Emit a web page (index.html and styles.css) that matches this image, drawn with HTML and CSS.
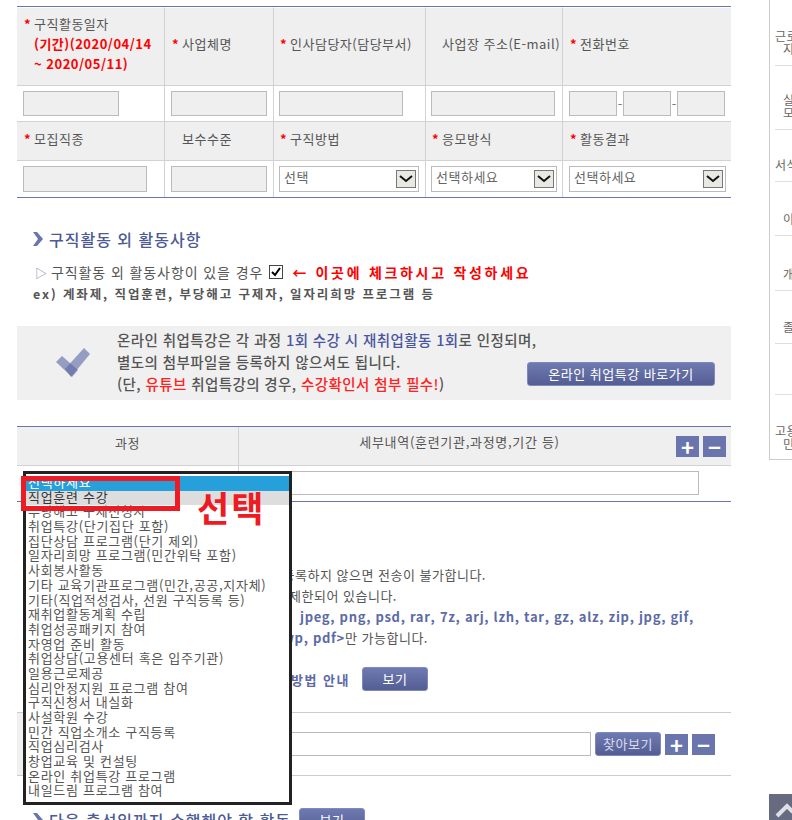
FILE: index.html
```html
<!DOCTYPE html>
<html lang="ko">
<head>
    <meta charset="UTF-8">
    <title>구직활동 등록</title>
    <link rel="stylesheet" href="styles.css">
</head>
<body>
<div class="page">
    <div class="main">
        <table class="activity">
            <colgroup>
                <col class="c1"><col class="c2"><col class="c3"><col class="c4"><col class="c5">
            </colgroup>
            <tr class="r1">
                <th>
                    <span class="star">*</span>구직활동일자
                    <div class="period">(기간)(2020/04/14</div>
                    <div class="period">~ 2020/05/11)</div>
                </th>
                <th><span class="star">*</span>사업체명</th>
                <th><span class="star">*</span>인사담당자(담당부서)</th>
                <th><span class="nostar"></span>사업장 주소(E-mail)</th>
                <th><span class="star">*</span>전화번호</th>
            </tr>
            <tr class="r2">
                <td><input class="box w96" type="text"></td>
                <td><input class="box w96" type="text"></td>
                <td><input class="box w124" type="text"></td>
                <td><input class="box w124" type="text"></td>
                <td>
                    <div class="phone">
                        <input class="box" type="text"><span class="dash">-</span>
                        <input class="box" type="text"><span class="dash">-</span>
                        <input class="box" type="text">
                    </div>
                </td>
            </tr>
            <tr class="r3">
                <th><span class="star">*</span>모집직종</th>
                <th><span class="nostar"></span>보수수준</th>
                <th><span class="star">*</span>구직방법</th>
                <th><span class="star">*</span>응모방식</th>
                <th><span class="star">*</span>활동결과</th>
            </tr>
            <tr class="r4">
                <td><input class="box tall w124" type="text"></td>
                <td><input class="box tall w96" type="text"></td>
                <td>
                    <div class="select w140">선택<span class="arrow"><svg width="14" height="8" viewBox="0 0 14 8"><path d="M1 1l6 5 6-5" fill="none" stroke="#111" stroke-width="2"/></svg></span></div>
                </td>
                <td>
                    <div class="select w126">선택하세요<span class="arrow"><svg width="14" height="8" viewBox="0 0 14 8"><path d="M1 1l6 5 6-5" fill="none" stroke="#111" stroke-width="2"/></svg></span></div>
                </td>
                <td>
                    <div class="select w157">선택하세요<span class="arrow"><svg width="14" height="8" viewBox="0 0 14 8"><path d="M1 1l6 5 6-5" fill="none" stroke="#111" stroke-width="2"/></svg></span></div>
                </td>
            </tr>
        </table>

        <h3 class="title first">
            <svg width="10" height="14" viewBox="0 0 10 14"><path d="M0 0h4l6 7-6 7H0l5-7z" fill="#6a75ae"/></svg>
            구직활동 외 활동사항
        </h3>
        <div class="other-check">
            <span class="tri">▷</span>
            <span>구직활동 외 활동사항이 있을 경우</span>
            <span class="tick"><svg width="14" height="14" viewBox="0 0 14 14"><path d="M3 7l3 3 5-7" fill="none" stroke="#000" stroke-width="2"/></svg></span>
            <span class="must">← 이곳에 체크하시고 작성하세요</span>
        </div>
        <div class="example">ex) 계좌제, 직업훈련, 부당해고 구제자, 일자리희망 프로그램 등</div>

        <div class="banner">
            <svg class="banner-icon" width="34" height="30" viewBox="0 0 34 30">
                <path d="M0 14l6-6 16 14-6 7z" fill="#5a66a3" opacity=".6"/>
                <path d="M9 21L28 0l6 6-19 23z" fill="#5a66a3" opacity=".6"/>
            </svg>
            <div class="banner-text">
                <div>온라인 취업특강은 각 과정 <span class="blue">1회 수강 시 재취업활동 1회</span>로 인정되며,</div>
                <div>별도의 첨부파일을 등록하지 않으셔도 됩니다.</div>
                <div>(단, <span class="red">유튜브</span> 취업특강의 경우, <span class="red">수강확인서 첨부 필수!</span>)</div>
            </div>
            <a class="btn btn-online">온라인 취업특강 바로가기</a>
        </div>

        <div class="course">
            <div class="course-head">
                <div class="course-name">과정</div>
                <div class="course-detail">
                    <span class="detail-label">세부내역(훈련기관,과정명,기간 등)</span>
                    <a class="sq">+</a><a class="sq">−</a>
                </div>
            </div>
            <div class="course-row">
                <div class="course-name"></div>
                <div class="course-input"><input class="plain" type="text"></div>
            </div>
        </div>

        <div class="notes">
            <div class="note n1">첨부파일을 등록하지 않으면 전송이 불가합니다.</div>
            <div class="note n2">파일 용량은 제한되어 있습니다.</div>
            <div class="note n3 ext">jpeg, png, psd, rar, 7z, arj, lzh, tar, gz, alz, zip, jpg, gif,</div>
            <div class="note n4"><span class="ext">hwp, pdf&gt;</span>만 가능합니다.</div>
        </div>
        <div class="guide">
            <span class="guide-label">첨부파일 등록방법 안내</span>
            <a class="btn btn-small">보기</a>
        </div>

        <div class="file-row">
            <div class="file-name"></div>
            <div class="file-input">
                <input class="plain" type="text">
                <a class="btn btn-find">찾아보기</a>
                <a class="sq">+</a><a class="sq">−</a>
            </div>
        </div>

        <div class="next">
            <h3 class="title">
                <svg width="10" height="14" viewBox="0 0 10 14"><path d="M0 0h4l6 7-6 7H0l5-7z" fill="#6a75ae"/></svg>
                다음 출석일까지 수행해야 할 활동
            </h3>
            <a class="btn btn-small">보기</a>
        </div>

        <!-- drop-down list pasted over the form, with the red marks -->
        <ul class="dropdown">
            <li class="on">선택하세요</li>
            <li class="hover">직업훈련 수강</li>
            <li>부당해고 구제신청자</li>
            <li>취업특강(단기집단 포함)</li>
            <li>집단상담 프로그램(단기 제외)</li>
            <li>일자리희망 프로그램(민간위탁 포함)</li>
            <li>사회봉사활동</li>
            <li>기타 교육기관프로그램(민간,공공,지자체)</li>
            <li>기타(직업적성검사, 선원 구직등록 등)</li>
            <li>재취업활동계획 수립</li>
            <li>취업성공패키지 참여</li>
            <li>자영업 준비 활동</li>
            <li>취업상담(고용센터 혹은 입주기관)</li>
            <li>일용근로제공</li>
            <li>심리안정지원 프로그램 참여</li>
            <li>구직신청서 내실화</li>
            <li>사설학원 수강</li>
            <li>민간 직업소개소 구직등록</li>
            <li>직업심리검사</li>
            <li>창업교육 및 컨설팅</li>
            <li>온라인 취업특강 프로그램</li>
            <li>내일드림 프로그램 참여</li>
        </ul>
        <div class="red-box"></div>
        <div class="red-word">선택</div>
    </div>

    <div class="side">
        <div class="side-item"><div>근로</div><div class="in">지</div></div>
        <div class="side-item"><div class="in">실</div><div class="in">모</div></div>
        <div class="side-item"><div>서식</div></div>
        <div class="side-item"><div class="in">이</div></div>
        <div class="side-item"><div class="in">개</div></div>
        <div class="side-item"><div class="in">졸</div></div>
        <div class="side-item"></div>
        <div class="side-item"><div>고용</div><div class="in">민</div></div>
    </div>

    <a class="to-top"><svg width="23" height="26" viewBox="0 0 23 26"><path d="M8 22l10-10 6 6" fill="none" stroke="#dfe0e6" stroke-width="4"/></svg></a>
</div>
</body>
</html>
```

FILE: styles.css
```css
html, body {
    margin: 0;
    padding: 0;
    background: #fff;
}
body {
    font-family: "Noto Sans CJK KR", "Liberation Sans", sans-serif;
    font-size: 13px;
    letter-spacing: 0.5px;
    color: #555;
}
.page {
    position: relative;
    display: flex;
    width: 792px;
    height: 820px;
    overflow: hidden;
}
.main {
    position: relative;
    flex: none;
    width: 714px;
    margin-left: 17px;
}

/* top table */
.activity {
    width: 714px;
    margin-top: 6px;
    table-layout: fixed;
    border-collapse: separate;
    border-spacing: 0;
    border-top: 1px solid #6a75ae;
    border-bottom: 1px solid #6a75ae;
}
.c1 { width: 148px; }
.c2 { width: 109px; }
.c3 { width: 152px; }
.c4 { width: 137px; }
.c5 { width: 168px; }
.activity th, .activity td {
    padding: 0 0 0 6px;
    border-right: 1px solid #d2d2d2;
    border-bottom: 1px solid #d2d2d2;
    text-align: left;
    font-weight: normal;
    box-sizing: border-box;
}
.activity th {
    padding: 0 0 6px 7px;
    background: #efefef;
    line-height: 19px;
}
.activity th:nth-child(3), .activity th:nth-child(4) { padding-left: 6px; }
.activity td:nth-child(3), .activity td:nth-child(4) { padding-left: 5px; }
.activity th:last-child, .activity td:last-child { border-right: 0; }
.activity .r1 th {
    height: 79px;
    padding-bottom: 6px;
    border-top: 1px solid #fff;
}
.r2 td { height: 36px; }
.r3 th { height: 39px; }
.r4 td { height: 36px; border-bottom: 0; }
.star {
    display: inline-block;
    width: 10px;
    color: #f00;
    font-weight: bold;
}
.nostar {
    display: inline-block;
    width: 10px;
}
.period {
    margin-top: 1px;
    padding-left: 10px;
    color: #f00;
    font-weight: bold;
}
.box {
    display: block;
    box-sizing: border-box;
    height: 25px;
    margin: 0;
    padding: 0;
    border: 1px solid #bbb;
    background: #efefef;
}
.tall { height: 26px; }
.w96 { width: 96px; }
.w124 { width: 124px; }
.phone {
    display: flex;
    align-items: center;
}
.phone .box { width: 48px; }
.dash {
    width: 6px;
    text-align: center;
    letter-spacing: 0;
    color: #777;
}
.select {
    position: relative;
    box-sizing: border-box;
    height: 26px;
    padding-left: 4px;
    border: 1px solid #bbb;
    background: #fff;
    line-height: 20px;
    color: #666;
}
.w140 { width: 140px; }
.w126 { width: 126px; }
.w157 { width: 157px; }
.arrow {
    position: absolute;
    right: 2px;
    top: 3px;
    display: flex;
    align-items: center;
    justify-content: center;
    box-sizing: border-box;
    width: 20px;
    height: 18px;
    border: 1px solid #777;
    background: #e9e9e4;
}

/* headings */
.title {
    display: flex;
    align-items: center;
    gap: 6px;
    margin: 0;
    padding-left: 16px;
    font-size: 16px;
    font-weight: 500;
    letter-spacing: 1px;
    line-height: 20px;
    color: #4c5a96;
    white-space: nowrap;
}
.first { margin-top: 31px; }
.other-check {
    display: flex;
    align-items: center;
    height: 22px;
    margin-top: 12px;
    padding-left: 18px;
    font-size: 14px;
    letter-spacing: 0.9px;
    white-space: nowrap;
}
.tri {
    width: 16px;
    font-size: 12px;
    color: #7c84a8;
    letter-spacing: 0;
}
.tick {
    display: flex;
    box-sizing: border-box;
    width: 14px;
    height: 14px;
    margin-left: 6px;
    border: 1px solid #444;
}
.tick svg { margin: -1px; }
.must {
    margin-left: 9px;
    color: #f00;
    font-weight: bold;
    letter-spacing: 2.7px;
}
.example {
    height: 22px;
    padding-left: 16px;
    font-size: 12.5px;
    font-weight: bold;
    letter-spacing: 1.9px;
    line-height: 22px;
    color: #555;
    white-space: nowrap;
}

/* banner */
.banner {
    display: flex;
    align-items: center;
    box-sizing: border-box;
    height: 74px;
    margin-top: 21px;
    background: #f0f0f0;
}
.banner-icon {
    flex: none;
    margin: 0 27px 0 39px;
}
.banner-text {
    flex: none;
    box-sizing: border-box;
    width: 410px;
    padding-bottom: 2px;
    font-size: 14.5px;
    font-weight: 500;
    letter-spacing: 0.4px;
    line-height: 22px;
    white-space: nowrap;
}
.blue { color: #4a56a0; }
.red { color: #f22; }
.btn {
    display: block;
    box-sizing: border-box;
    flex: none;
    height: 24px;
    border: 1px solid #8089bb;
    border-radius: 3px;
    background: linear-gradient(#6f7ab2, #545e93);
    color: #fff;
    text-align: center;
    line-height: 21px;
}
.btn-online {
    align-self: flex-end;
    width: 188px;
    margin-bottom: 14px;
}
.btn-small { width: 66px; }
.btn-find {
    width: 66px;
    color: #d8daea;
}
.sq {
    display: block;
    flex: none;
    width: 23px;
    height: 21px;
    background: #6a75ae;
    color: #fff;
    font-size: 22px;
    font-weight: bold;
    letter-spacing: 0;
    text-align: center;
    line-height: 20px;
}

/* course table */
.course {
    margin-top: 26px;
    border-top: 1px solid #6a75ae;
    border-bottom: 1px solid #6a75ae;
}
.course-head {
    display: flex;
    height: 39px;
    box-sizing: border-box;
    background: #efefef;
    border-bottom: 1px solid #d2d2d2;
}
.course-name {
    flex: none;
    box-sizing: border-box;
    width: 222px;
    border-right: 1px solid #d2d2d2;
    text-align: center;
    line-height: 32px;
}
.course-detail {
    flex: 1;
    display: flex;
    align-items: center;
    gap: 4px;
    padding-right: 5px;
}
.detail-label {
    flex: 1;
    margin-top: -10px;
    padding-left: 8px;
    text-align: center;
    letter-spacing: 0.7px;
}
.course-row {
    display: flex;
    height: 35px;
}
.course-input {
    flex: 1;
    padding: 5px 32px 0 6px;
}
.plain {
    display: block;
    box-sizing: border-box;
    width: 100%;
    height: 24px;
    margin: 0;
    border: 1px solid #bbb;
    background: #fff;
}

/* notes */
.notes { margin-top: 62px; }
.note {
    height: 21px;
    line-height: 21px;
    text-align: right;
    white-space: nowrap;
}
.n1 { width: 469px; }
.n2 { width: 380px; }
.n3 { width: 677px; }
.n4 { width: 411px; }
.ext {
    color: #5c6aa6;
    font-weight: bold;
    letter-spacing: 0.7px;
}
.guide {
    display: flex;
    align-items: center;
    gap: 12px;
    height: 24px;
    margin-top: 19px;
}
.guide-label {
    width: 333px;
    color: #5c6aa6;
    font-weight: bold;
    letter-spacing: 1.5px;
    text-align: right;
}
.file-row {
    display: flex;
    box-sizing: border-box;
    height: 64px;
    margin-top: 21px;
    border-top: 1px solid #ccc;
    border-bottom: 1px solid #ccc;
}
.file-name {
    flex: none;
    width: 222px;
    background: #f0f0f0;
}
.file-input {
    display: flex;
    align-items: center;
    gap: 4px;
    width: 471px;
    padding-left: 5px;
}
.file-input .plain {
    flex: 1;
    width: auto;
}
.next {
    display: flex;
    align-items: center;
    gap: 8px;
    height: 24px;
    margin-top: 32px;
}

/* list and marks lying over the form */
.dropdown {
    position: absolute;
    left: 6px;
    top: 471px;
    box-sizing: border-box;
    width: 269px;
    height: 334px;
    margin: 0;
    padding: 2px 0 0;
    list-style: none;
    border: 3px solid #222;
    background: #fff;
}
.dropdown li {
    height: 14.7px;
    padding-left: 2px;
    letter-spacing: 0.7px;
    line-height: 11px;
    white-space: nowrap;
    color: #555;
}
.dropdown .on {
    background: #26a0da;
    color: #fff;
}
.dropdown .hover {
    background: #ddd;
    color: #333;
}
.red-box {
    position: absolute;
    left: 4px;
    top: 476px;
    box-sizing: border-box;
    width: 159px;
    height: 35px;
    border: 5px solid #ed1c24;
}
.red-word {
    position: absolute;
    left: 180px;
    top: 487px;
    font-size: 35px;
    font-weight: bold;
    letter-spacing: 2px;
    line-height: 40px;
    color: #ed1c24;
}

/* right column, cut by the window */
.side {
    display: grid;
    grid-template-rows: 66px 64px 52px 54px 55px 53px 51px 65px;
    flex: none;
    box-sizing: border-box;
    width: 60px;
    height: 460px;
    margin-left: 38px;
    padding-left: 5px;
    border-left: 1px solid #ccc;
    border-bottom: 1px solid #ccc;
}
.side-item {
    display: flex;
    flex-direction: column;
    justify-content: flex-end;
    box-sizing: border-box;
    padding-bottom: 10px;
    border-bottom: 1px solid #ddd;
    font-size: 12px;
    line-height: 13px;
    color: #666;
    white-space: nowrap;
}
.in { padding-left: 8px; }
.side-item:last-child { border-bottom: 0; }
.to-top {
    position: absolute;
    right: 0;
    bottom: 0;
    width: 23px;
    height: 26px;
    overflow: hidden;
    background: #666b82;
}
.to-top svg { display: block; }
```
